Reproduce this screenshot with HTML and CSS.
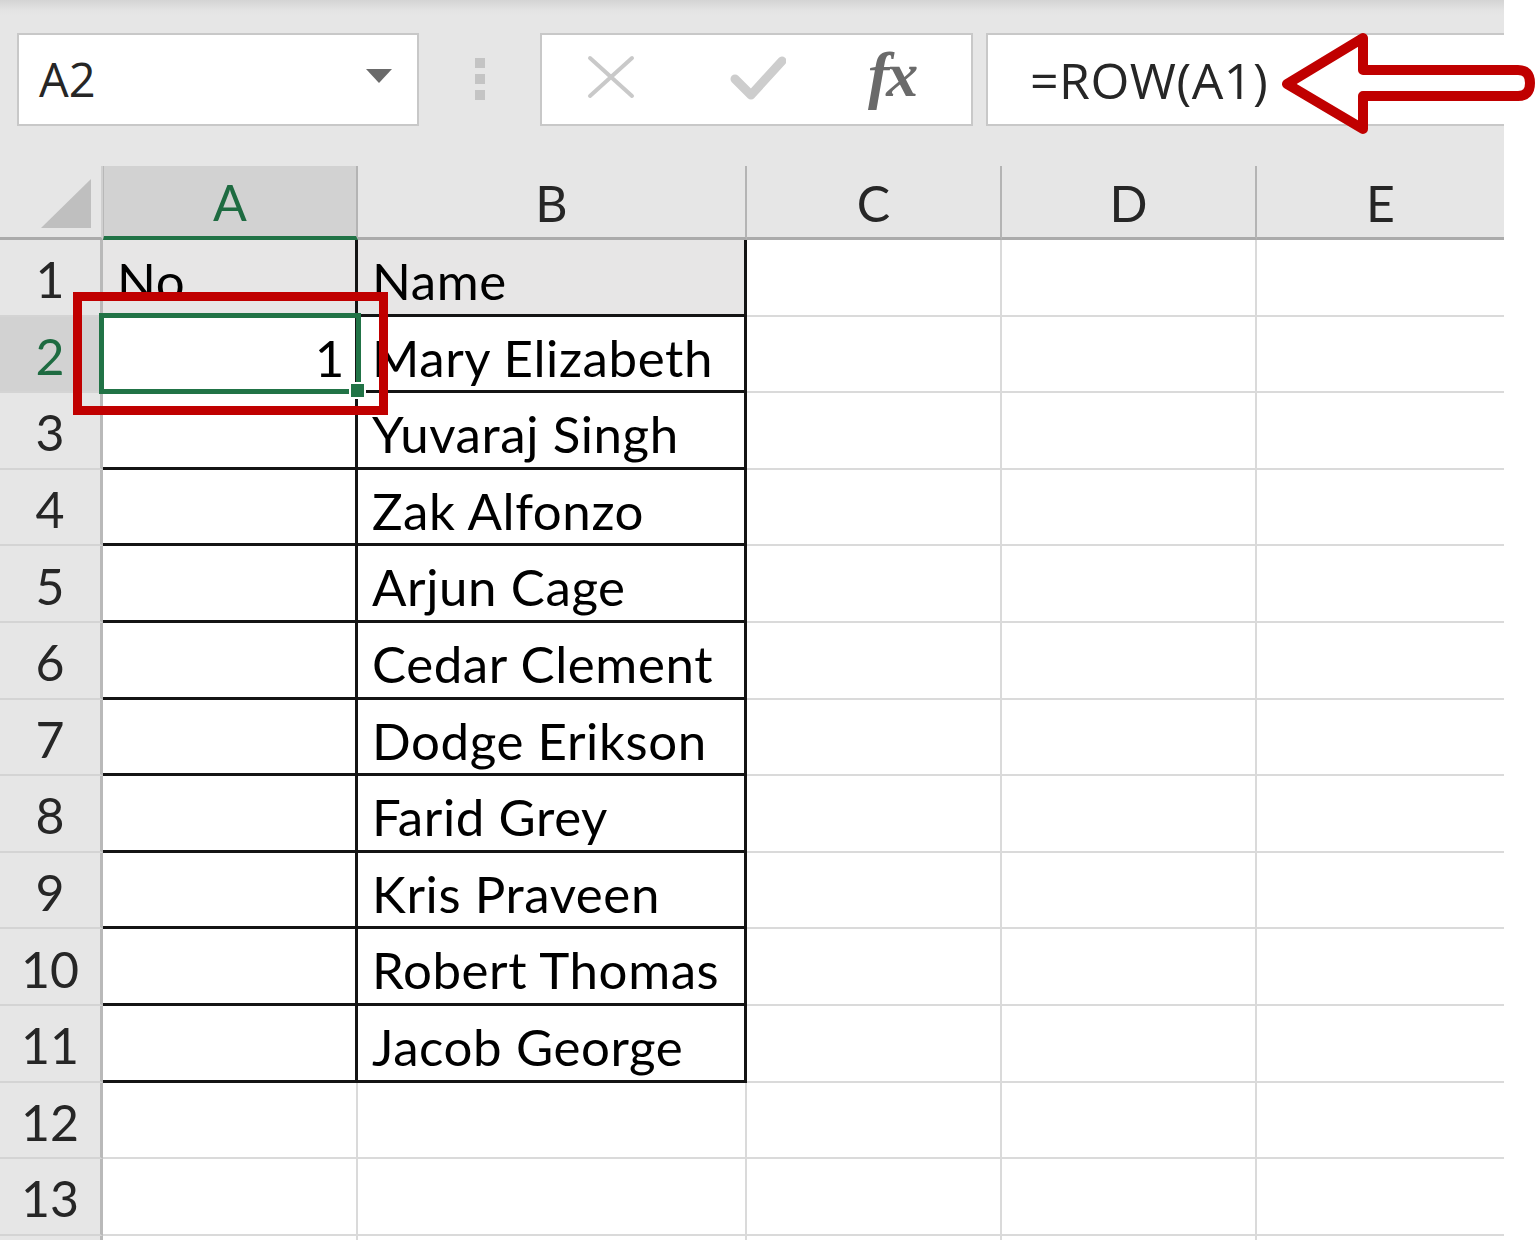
FILE: index.html
```html
<!DOCTYPE html>
<html>
<head>
<meta charset="utf-8">
<link rel="stylesheet" href="styles.css">
</head>
<body>
<div class="app">
  <div class="toolbar">
    <div class="name-box">
      <span>A2</span>
      <svg class="caret" width="26" height="14" viewBox="0 0 26 14"><path d="M0 0 H26 L13 14 Z" fill="#6a6a6a"/></svg>
    </div>
    <div class="grip"><i></i><i></i><i></i></div>
    <div class="fx-buttons">
      <svg class="ico-x" width="48" height="44" viewBox="0 0 48 44"><path d="M3 3 L45 41 M45 3 L3 41" stroke="#c9c9c9" stroke-width="4" stroke-linecap="round" fill="none"/></svg>
      <svg class="ico-check" width="56" height="46" viewBox="0 0 56 46"><path d="M5 24 L21 40 L52 6" stroke="#cdcdcd" stroke-width="9" stroke-linejoin="round" stroke-linecap="round" fill="none"/></svg>
      <span class="fx">fx</span>
    </div>
    <div class="formula-input">=ROW(A1)</div>
  </div>

  <div class="sheet">
    <div class="ch corner"><svg width="50" height="49" viewBox="0 0 50 49"><path d="M50 0 V49 H0 Z" fill="#bfbfbf"/></svg></div>
    <div class="ch sel">A</div>
    <div class="ch">B</div>
    <div class="ch">C</div>
    <div class="ch">D</div>
    <div class="ch last">E</div>

    <div class="rh">1</div>
    <div class="c t ta hd">No</div>
    <div class="c t tb hd">Name</div>
    <div class="c"></div><div class="c"></div><div class="c last"></div>

    <div class="rh sel">2</div>
    <div class="c t ta num active">1<span class="sel-box"><span class="handle"></span></span></div>
    <div class="c t tb">Mary Elizabeth</div>
    <div class="c"></div><div class="c"></div><div class="c last"></div>

    <div class="rh">3</div>
    <div class="c t ta"></div>
    <div class="c t tb">Yuvaraj Singh</div>
    <div class="c"></div><div class="c"></div><div class="c last"></div>

    <div class="rh">4</div>
    <div class="c t ta"></div>
    <div class="c t tb">Zak Alfonzo</div>
    <div class="c"></div><div class="c"></div><div class="c last"></div>

    <div class="rh">5</div>
    <div class="c t ta"></div>
    <div class="c t tb">Arjun Cage</div>
    <div class="c"></div><div class="c"></div><div class="c last"></div>

    <div class="rh">6</div>
    <div class="c t ta"></div>
    <div class="c t tb">Cedar Clement</div>
    <div class="c"></div><div class="c"></div><div class="c last"></div>

    <div class="rh">7</div>
    <div class="c t ta"></div>
    <div class="c t tb">Dodge Erikson</div>
    <div class="c"></div><div class="c"></div><div class="c last"></div>

    <div class="rh">8</div>
    <div class="c t ta"></div>
    <div class="c t tb">Farid Grey</div>
    <div class="c"></div><div class="c"></div><div class="c last"></div>

    <div class="rh">9</div>
    <div class="c t ta"></div>
    <div class="c t tb">Kris Praveen</div>
    <div class="c"></div><div class="c"></div><div class="c last"></div>

    <div class="rh">10</div>
    <div class="c t ta"></div>
    <div class="c t tb">Robert Thomas</div>
    <div class="c"></div><div class="c"></div><div class="c last"></div>

    <div class="rh">11</div>
    <div class="c t ta"></div>
    <div class="c t tb">Jacob George</div>
    <div class="c"></div><div class="c"></div><div class="c last"></div>

    <div class="rh">12</div>
    <div class="c"></div><div class="c"></div><div class="c"></div><div class="c"></div><div class="c last"></div>

    <div class="rh">13</div>
    <div class="c"></div><div class="c"></div><div class="c"></div><div class="c"></div><div class="c last"></div>

    <div class="rh"></div>
    <div class="c"></div><div class="c"></div><div class="c"></div><div class="c"></div><div class="c last"></div>
  </div>

  <div class="red-box"></div>
  <svg class="arrow" width="1536" height="1240" viewBox="0 0 1536 1240">
    <path d="M1287 84 L1363 38 L1363 70 L1518 70 Q1530 70 1530 83 Q1530 96 1518 96 L1363 96 L1363 129 Z" fill="#ffffff" stroke="#c00000" stroke-width="10" stroke-linejoin="round"/>
  </svg>
</div>
</body>
</html>
```

FILE: styles.css
```css
* { box-sizing: border-box; }

body {
  margin: 0;
  background: #ffffff;
  font-family: "Lato", "Open Sans", sans-serif;
}

.app {
  position: relative;
  width: 1536px;
  height: 1240px;
  overflow: hidden;
  background: #ffffff;
}

/* ---------- formula bar ---------- */
.toolbar {
  width: 1504px;
  height: 166px;
  background: linear-gradient(#d4d4d4 0px, #e3e3e3 10px, #e6e6e6 16px, #e6e6e6 100%);
  display: flex;
  align-items: flex-start;
  padding: 33px 0 0 17px;
}

.name-box {
  width: 402px;
  height: 93px;
  background: #ffffff;
  border: 2px solid #c8c8c8;
  display: flex;
  align-items: center;
  justify-content: space-between;
  padding: 0 25px 0 20px;
  font-family: "Open Sans", sans-serif;
  font-size: 47px;
  color: #262626;
}

.name-box span { margin-top: -2px; }
.caret { margin-top: -8px; }

.grip {
  margin-left: 56px;
  padding-top: 25px;
  display: flex;
  flex-direction: column;
  gap: 6px;
}

.grip i {
  display: block;
  width: 10px;
  height: 10px;
  background: #c4c4c4;
}

.fx-buttons {
  margin-left: 55px;
  width: 433px;
  height: 93px;
  background: #ffffff;
  border: 2px solid #c8c8c8;
  display: flex;
  align-items: center;
  padding-left: 45px;
}

.ico-x { margin-top: -6px; }
.ico-check { margin-left: 95px; margin-top: -4px; }

.fx {
  margin-left: 82px;
  margin-top: -10px;
  font-family: "Liberation Serif", serif;
  font-style: italic;
  font-weight: bold;
  font-size: 64px;
  letter-spacing: -3px;
  color: #6a6a6a;
}

.formula-input {
  margin-left: 13px;
  flex: 1;
  height: 93px;
  background: #ffffff;
  border: 2px solid #c8c8c8;
  border-right: none;
  padding-left: 42px;
  display: flex;
  align-items: center;
  font-family: "Open Sans", sans-serif;
  font-size: 50px;
  letter-spacing: 0.5px;
  color: #262626;
}

/* ---------- sheet ---------- */
.sheet {
  width: 1504px;
  display: grid;
  grid-template-columns: 103px 255px 389px 255px 255px 247px;
  grid-template-rows: 74px repeat(14, 76.6px);
}

.ch {
  background: #e6e6e6;
  border-bottom: 3px solid #ababab;
  border-right: 2px solid #b4b4b4;
  display: flex;
  align-items: center;
  justify-content: center;
  font-size: 50px;
  color: #262626;
  padding-top: 2px;
}

.ch.corner {
  justify-content: flex-end;
  align-items: flex-end;
  padding: 0 10px 9px 0;
  border-right: 2px solid #d0d0d0;
}

.ch.sel {
  background: #d2d2d2;
  color: #1e6b41;
  border-bottom: 4px solid #217346;
  border-left: 1px solid #b8b8b8;
}

.ch.last { border-right: none; }

.rh {
  background: #e6e6e6;
  border-right: 3px solid #b9b9b9;
  border-bottom: 2px solid #d4d4d4;
  display: flex;
  align-items: center;
  justify-content: center;
  font-size: 50px;
  color: #262626;
  padding-top: 4px;
}

.rh.sel {
  background: #d2d2d2;
  color: #1e6b41;
}

.c {
  position: relative;
  background: #ffffff;
  border-right: 2px solid #dadada;
  border-bottom: 2px solid #dadada;
  padding: 3px 14px 0 14px;
  font-size: 51px;
  line-height: 76px;
  letter-spacing: 0.6px;
  color: #000000;
  white-space: nowrap;
}

.c.last { border-right: none; }

.c.t { border-bottom: 3px solid #141414; }
.c.ta { border-right: 3px solid #141414; }
.c.tb { border-right: 3px solid #141414; }
.c.hd { background: #e7e6e6; }

.c.num {
  text-align: right;
  padding-right: 10px;
}

.c.active { z-index: 2; }

.sel-box {
  position: absolute;
  left: -4px;
  top: -4px;
  right: -6px;
  bottom: -4px;
  border: 5px solid #217346;
  pointer-events: none;
}

.handle {
  position: absolute;
  right: -10px;
  bottom: -10px;
  width: 17px;
  height: 17px;
  background: #217346;
  border: 2px solid #ffffff;
}

/* ---------- annotations ---------- */
.red-box {
  position: absolute;
  z-index: 3;
  left: 73px;
  top: 292px;
  width: 315px;
  height: 123px;
  border: 9px solid #c00000;
}

.arrow {
  position: absolute;
  z-index: 3;
  left: 0;
  top: 0;
  pointer-events: none;
}
```
